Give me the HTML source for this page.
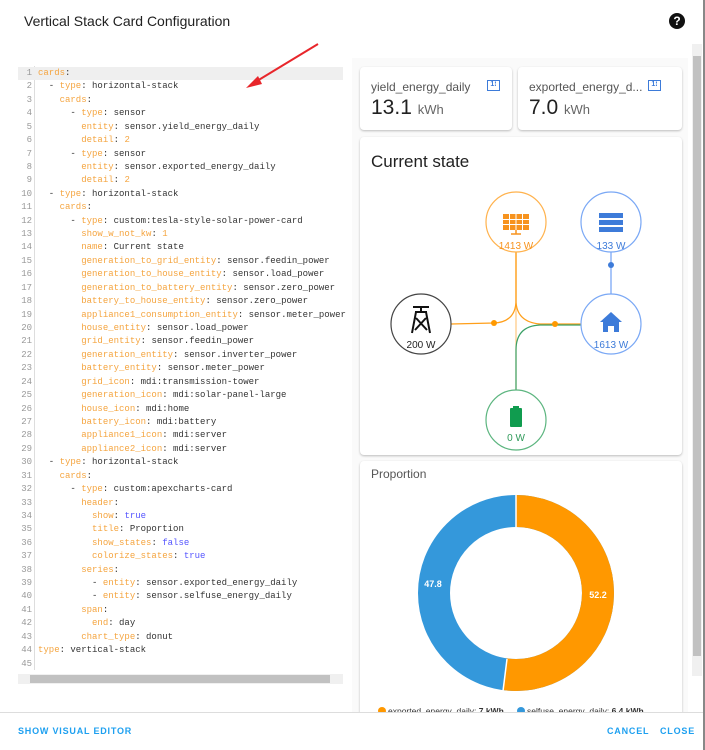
<!DOCTYPE html>
<html><head><meta charset="utf-8"><style>
*{margin:0;padding:0;box-sizing:border-box}
body{width:705px;height:750px;background:#fff;font-family:"Liberation Sans",sans-serif;position:relative;overflow:hidden}
.title{position:absolute;left:24px;top:13px;font-size:14px;color:#212121}
.help{position:absolute;left:669px;top:13px;width:16px;height:16px;border-radius:50%;background:#111;color:#fff;font-size:12px;font-weight:bold;text-align:center;line-height:16px}
.edge{position:absolute;right:0;top:0;width:2px;height:750px;background:#888}
.sb{position:absolute;left:692px;top:44px;width:10px;height:632px;background:#f0f0f0}
.sb div{position:absolute;left:1px;top:12px;width:8px;height:600px;background:#c1c1c1}
.editor{position:absolute;left:18px;top:66px;width:325px;height:620px;background:#fff}
.gut{position:absolute;left:0;top:0;width:17px;height:604px;border-right:1px solid #ddd}
.code{position:absolute;left:0;top:1px;font-family:"Liberation Mono",monospace;font-size:9px;line-height:13.42px;color:#333;white-space:pre}
.ln{display:inline-block;width:14px;text-align:right;color:#999;margin-right:6px}
.k{color:#f5a540}.b{color:#55f}
.l1{background:#efefef;width:325px;display:block}
.hs{position:absolute;left:18px;top:674px;width:325px;height:10px;background:#f0f0f0}
.hs div{position:absolute;left:12px;top:1px;width:300px;height:8px;background:#c1c1c1}
.panel{position:absolute;left:352px;top:58px;width:336px;height:654px;background:#fafafa}
.card{position:absolute;background:#fff;border-radius:4px;box-shadow:0 1px 2px rgba(0,0,0,.25)}
.sn{position:absolute;left:11px;top:13px;font-size:12px;color:#555}
.sv{position:absolute;left:11px;top:29px;font-size:21px;color:#212121}
.sv span{font-size:13px;color:#666}
.ic{position:absolute;top:13px;width:13px;height:11px;border:1.5px solid #3d7bd9;font-size:7px;color:#3d7bd9;line-height:8px;text-align:center;font-weight:bold}
.foot{position:absolute;left:0;top:712px;width:703px;border-top:1px solid #ddd;height:38px;background:#fff}
.btn{position:absolute;top:726px;font-size:9px;font-weight:bold;color:#1ea0f0;letter-spacing:.8px}
</style></head><body>
<div class="title">Vertical Stack Card Configuration</div>
<div class="help">?</div>
<div class="sb"><div></div></div>
<div class="editor">
<div class="gut"></div>
<div class="code"><span class="l1"><span class="ln">1</span><span class="k">cards</span>:</span><span class="ln">2</span>  - <span class="k">type</span>: horizontal-stack
<span class="ln">3</span>    <span class="k">cards</span>:
<span class="ln">4</span>      - <span class="k">type</span>: sensor
<span class="ln">5</span>        <span class="k">entity</span>: sensor.yield_energy_daily
<span class="ln">6</span>        <span class="k">detail</span>: <span class="k">2</span>
<span class="ln">7</span>      - <span class="k">type</span>: sensor
<span class="ln">8</span>        <span class="k">entity</span>: sensor.exported_energy_daily
<span class="ln">9</span>        <span class="k">detail</span>: <span class="k">2</span>
<span class="ln">10</span>  - <span class="k">type</span>: horizontal-stack
<span class="ln">11</span>    <span class="k">cards</span>:
<span class="ln">12</span>      - <span class="k">type</span>: custom:tesla-style-solar-power-card
<span class="ln">13</span>        <span class="k">show_w_not_kw</span>: <span class="k">1</span>
<span class="ln">14</span>        <span class="k">name</span>: Current state
<span class="ln">15</span>        <span class="k">generation_to_grid_entity</span>: sensor.feedin_power
<span class="ln">16</span>        <span class="k">generation_to_house_entity</span>: sensor.load_power
<span class="ln">17</span>        <span class="k">generation_to_battery_entity</span>: sensor.zero_power
<span class="ln">18</span>        <span class="k">battery_to_house_entity</span>: sensor.zero_power
<span class="ln">19</span>        <span class="k">appliance1_consumption_entity</span>: sensor.meter_power
<span class="ln">20</span>        <span class="k">house_entity</span>: sensor.load_power
<span class="ln">21</span>        <span class="k">grid_entity</span>: sensor.feedin_power
<span class="ln">22</span>        <span class="k">generation_entity</span>: sensor.inverter_power
<span class="ln">23</span>        <span class="k">battery_entity</span>: sensor.meter_power
<span class="ln">24</span>        <span class="k">grid_icon</span>: mdi:transmission-tower
<span class="ln">25</span>        <span class="k">generation_icon</span>: mdi:solar-panel-large
<span class="ln">26</span>        <span class="k">house_icon</span>: mdi:home
<span class="ln">27</span>        <span class="k">battery_icon</span>: mdi:battery
<span class="ln">28</span>        <span class="k">appliance1_icon</span>: mdi:server
<span class="ln">29</span>        <span class="k">appliance2_icon</span>: mdi:server
<span class="ln">30</span>  - <span class="k">type</span>: horizontal-stack
<span class="ln">31</span>    <span class="k">cards</span>:
<span class="ln">32</span>      - <span class="k">type</span>: custom:apexcharts-card
<span class="ln">33</span>        <span class="k">header</span>:
<span class="ln">34</span>          <span class="k">show</span>: <span class="b">true</span>
<span class="ln">35</span>          <span class="k">title</span>: Proportion
<span class="ln">36</span>          <span class="k">show_states</span>: <span class="b">false</span>
<span class="ln">37</span>          <span class="k">colorize_states</span>: <span class="b">true</span>
<span class="ln">38</span>        <span class="k">series</span>:
<span class="ln">39</span>          - <span class="k">entity</span>: sensor.exported_energy_daily
<span class="ln">40</span>          - <span class="k">entity</span>: sensor.selfuse_energy_daily
<span class="ln">41</span>        <span class="k">span</span>:
<span class="ln">42</span>          <span class="k">end</span>: day
<span class="ln">43</span>        <span class="k">chart_type</span>: donut
<span class="ln">44</span><span class="k">type</span>: vertical-stack
<span class="ln">45</span></div>
</div>
<div class="hs"><div></div></div>
<svg style="position:absolute;left:0;top:0" width="705" height="750"><line x1="318" y1="44" x2="252" y2="84" stroke="#e8262b" stroke-width="2"/><polygon points="246,88 258,76 262,84" fill="#e8262b"/></svg>
<div class="panel"></div>
<div class="card" style="left:360px;top:67px;width:152px;height:63px"><div class="sn">yield_energy_daily</div><div class="ic" style="left:127px">1⁞</div><div class="sv">13.1 <span>kWh</span></div></div>
<div class="card" style="left:518px;top:67px;width:164px;height:63px"><div class="sn">exported_energy_d...</div><div class="ic" style="left:130px">1⁞</div><div class="sv">7.0 <span>kWh</span></div></div>
<div class="card" style="left:360px;top:137px;width:322px;height:318px"><div style="position:absolute;left:11px;top:15px;font-size:17px;color:#212121">Current state</div></div>
<div class="card" style="left:360px;top:461px;width:322px;height:280px"><div style="position:absolute;left:11px;top:6px;font-size:12px;color:#555">Proportion</div></div>
<svg style="position:absolute;left:0;top:0" width="705" height="750" font-family="Liberation Sans" font-size="10" text-anchor="middle">
<g fill="none" stroke-width="1.2">
<line x1="516" y1="252" x2="516" y2="390" stroke="#ffc980"/>
<path d="M516 252 V300 Q516 322 494 323 L451 324" stroke="#ff9f1a"/>
<path d="M516 252 V300 Q516 322 540 324 L581 324" stroke="#ff9f1a"/>
<path d="M516 390 V350 Q516 326 540 325 L581 325" stroke="#3aa066"/>
<line x1="611" y1="252" x2="611" y2="294" stroke="#6fa0f5"/>
<circle cx="516" cy="222" r="30" stroke="#ffb24d"/>
<circle cx="611" cy="222" r="30" stroke="#7aa8f5"/>
<circle cx="421" cy="324" r="30" stroke="#444"/>
<circle cx="611" cy="324" r="30" stroke="#7aa8f5"/>
<circle cx="516" cy="420" r="30" stroke="#5cb57f"/>
</g>
<circle cx="494" cy="323" r="3" fill="#f90"/><circle cx="555" cy="324" r="3" fill="#f90"/><circle cx="611" cy="265" r="3" fill="#3d7bd9"/>
<g fill="#f7931e"><rect x="503" y="214" width="26" height="16"/></g>
<g stroke="#fff" stroke-width="1"><line x1="509.5" y1="214" x2="509.5" y2="230"/><line x1="516" y1="214" x2="516" y2="230"/><line x1="522.5" y1="214" x2="522.5" y2="230"/><line x1="503" y1="219.5" x2="529" y2="219.5"/><line x1="503" y1="224.5" x2="529" y2="224.5"/></g>
<path d="M516 230 V234 M511 234 H521" stroke="#f7931e" stroke-width="1.5"/>
<text x="516" y="249" fill="#f7931e">1413 W</text>
<g fill="#3d7bd9"><rect x="599" y="213" width="24" height="5"/><rect x="599" y="220" width="24" height="5"/><rect x="599" y="227" width="24" height="5"/></g>
<text x="611" y="249" fill="#3d7bd9">133 W</text>
<path d="M413 307 H429 M415 312 H427 M421 307 V312 M416 312 L412 333 M426 312 L430 333 M416 318 L427 330 M426 318 L415 330" stroke="#111" stroke-width="2" fill="none"/>
<text x="421" y="348" fill="#222">200 W</text>
<path d="M611 312 L600 322 H603 V332 H608 V326 H614 V332 H619 V322 H622 Z" fill="#3d7bd9"/>
<text x="611" y="348" fill="#3d7bd9">1613 W</text>
<rect x="510" y="408" width="12" height="19" rx="1" fill="#109c4f"/><rect x="513" y="406" width="6" height="2" fill="#109c4f"/>
<text x="516" y="441" fill="#2f9a5a">0 W</text>
<circle cx="516" cy="593" r="82" fill="none" stroke="#3498db" stroke-width="32"/>
<circle cx="516" cy="593" r="82" fill="none" stroke="#ff9800" stroke-width="32" stroke-dasharray="268.9 600" transform="rotate(-90 516 593)"/>
<line x1="516" y1="495" x2="516" y2="527" stroke="#fff" stroke-width="1.5"/>
<line x1="507" y1="659" x2="503" y2="691" stroke="#fff" stroke-width="1.5"/>
<text x="598" y="598" fill="#fff" font-weight="bold" font-size="9">52.2</text>
<text x="433" y="587" fill="#fff" font-weight="bold" font-size="9">47.8</text>
<circle cx="382" cy="711" r="4" fill="#ff9800"/><circle cx="521" cy="711" r="4" fill="#3498db"/>
<text x="388" y="714" font-size="8.5" fill="#333" text-anchor="start">exported_energy_daily: <tspan font-weight="bold">7 kWh</tspan></text>
<text x="527" y="714" font-size="8.5" fill="#333" text-anchor="start">selfuse_energy_daily: <tspan font-weight="bold">6.4 kWh</tspan></text>
</svg>
<div class="foot"></div>
<div class="btn" style="left:18px">SHOW VISUAL EDITOR</div>
<div class="btn" style="left:607px">CANCEL</div>
<div class="btn" style="left:660px">CLOSE</div>
<div class="edge"></div>
</body></html>
